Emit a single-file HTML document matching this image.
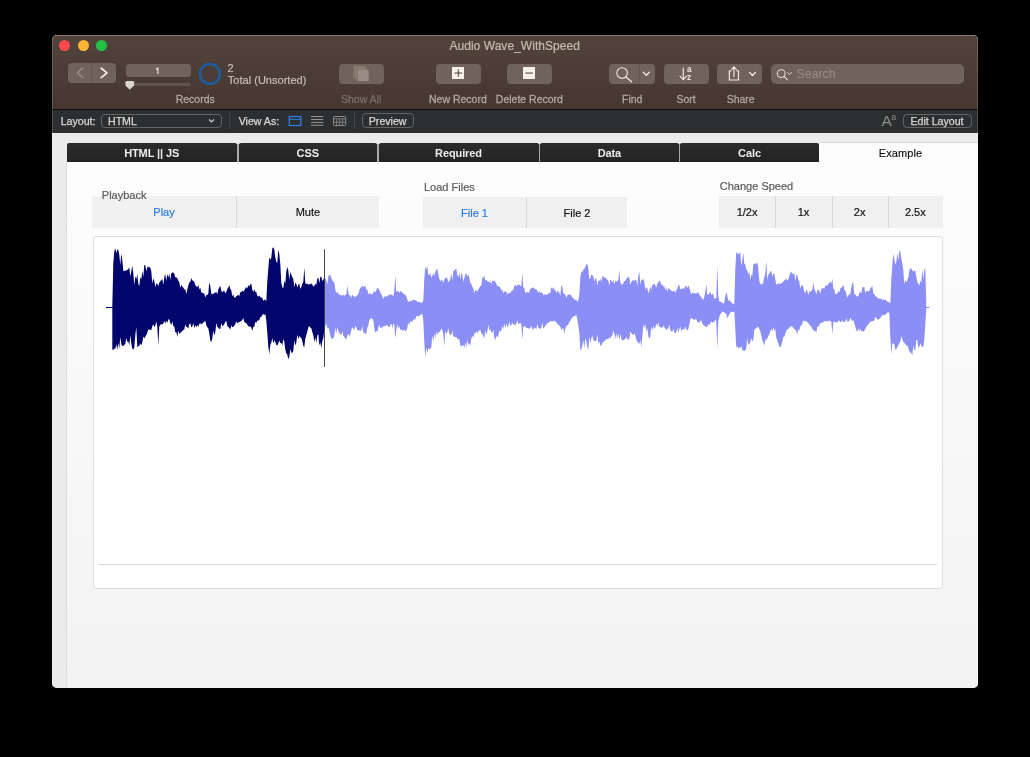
<!DOCTYPE html>
<html><head><meta charset="utf-8">
<style>
*{box-sizing:border-box;margin:0;padding:0}
html,body{width:1030px;height:757px;background:#000;overflow:hidden;font-family:"Liberation Sans",sans-serif}
.a{position:absolute}
#win{will-change:transform;position:absolute;left:52px;top:35px;width:926px;height:653px;border-radius:5px;overflow:hidden;background:#ebebeb}
#tb{position:absolute;left:0;top:0;width:926px;height:74px;background:linear-gradient(#52443c,#453730);border-top:1px solid #85776e}
.tl{position:absolute;top:3.6px;width:11.3px;height:11.3px;border-radius:50%}
.btn{position:absolute;background:#70635b;border-radius:4px}
.lbl{position:absolute;font-size:10.5px;color:#b2a69e;white-space:nowrap;top:56.7px;line-height:12px;-webkit-text-stroke:0.3px currentColor}
#lb{position:absolute;left:0;top:74px;width:926px;height:24px;background:#2d2e30;border-top:1px solid #0a0a0a}
.lbt{position:absolute;font-size:10.6px;color:#d9d9d9;white-space:nowrap;line-height:12px;-webkit-text-stroke:0.25px #d9d9d9}
.pill{position:absolute;border:1px solid #646567;border-radius:4px}
#content{position:absolute;left:0;top:98px;width:926px;height:555px;background:#ebebeb}
#panel{position:absolute;left:14px;top:29px;width:912px;height:526px;background:linear-gradient(#fdfdfd,#f9f9f9 40%,#f3f3f3);border-left:1px solid #dedede}
.tab{position:absolute;top:10px;height:19.1px;border-radius:2px 2px 0 0;background:linear-gradient(#2c2c2c,#232323);color:#ececec;font-weight:bold;font-size:11px;text-align:center;line-height:20px;letter-spacing:-0.1px}
.t{position:absolute;white-space:nowrap;font-size:11px;line-height:13px;-webkit-text-stroke:0.2px currentColor}
.sb{position:absolute;background:#f0f0f0}
.dv{position:absolute;top:0;width:1px;height:100%;background:#d6d6d6}
</style></head><body>
<div id="win">
  <div id="tb">
    <div class="tl" style="left:6.9px;background:#fb4a4c"></div>
    <div class="tl" style="left:25.5px;background:#fdb535"></div>
    <div class="tl" style="left:44px;background:#22c244"></div>
    <div class="a" style="left:-0.3px;width:926px;top:3.4px;text-align:center;font-size:12px;color:#c6bbb2;line-height:14px;letter-spacing:0.05px;-webkit-text-stroke:0.2px currentColor">Audio Wave_WithSpeed</div>

    <!-- nav -->
    <div class="btn" style="left:15.8px;top:26.9px;width:48.4px;height:19.9px"></div>
    <div class="a" style="left:39.2px;top:26.9px;width:0.8px;height:19.9px;background:#665951"></div>
    <svg class="a" style="left:0;top:0" width="926" height="74">
      <path d="M30.7 32.2 L25.3 36.9 L30.7 41.6" stroke="#958a82" stroke-width="1.6" fill="none" stroke-linecap="round" stroke-linejoin="round"/>
      <path d="M49.3 32.2 L54.9 36.9 L49.3 41.6" stroke="#f4ede6" stroke-width="1.8" fill="none" stroke-linecap="round" stroke-linejoin="round"/>
    </svg>
    <!-- record field -->
    <div class="btn" style="left:73.6px;top:27.6px;width:65.5px;height:13.4px;border-radius:3.5px"></div>
    <svg class="a" style="left:0;top:0" width="926" height="74"><path d="M103.9 33.4 L105.9 31.9 V38" stroke="#e9e1db" stroke-width="1.25" fill="none" stroke-linejoin="round"/></svg>
    <div class="a" style="left:80px;top:47px;width:59px;height:2.8px;background:#5f534c;border-radius:1.4px"></div>
    <svg class="a" style="left:0;top:0" width="926" height="74"><path d="M74.8 45.1 H80.7 Q82.1 45.1 82.1 46.5 V49.6 L77.75 53.8 L73.4 49.6 V46.5 Q73.4 45.1 74.8 45.1 Z" fill="#dad4cf"/><rect x="134.6" y="53" width="1" height="1" fill="#6a5e57"/></svg>
    <svg class="a" style="left:0;top:0" width="926" height="74"><circle cx="158" cy="37.9" r="9.9" stroke="#1f5b9f" stroke-width="2.7" fill="none"/></svg>
    <div class="t" style="left:175.6px;top:25.5px;font-size:11px;color:#c9bfb7">2</div>
    <div class="t" style="left:175.8px;top:38.1px;font-size:11px;color:#c9bfb7;letter-spacing:0.02px">Total (Unsorted)</div>
    <div class="lbl" style="left:123.7px">Records</div>

    <!-- show all -->
    <div class="btn" style="left:287px;top:27.7px;width:45px;height:20.2px"></div>
    <svg class="a" style="left:0;top:0" width="926" height="74">
      <rect x="301.8" y="30.1" width="10.8" height="11" fill="#7f726a" stroke="#8b7e76" stroke-width="0.7"/>
      <rect x="303.7" y="32" width="10.8" height="11" fill="#85786f" stroke="#918479" stroke-width="0.7"/>
      <rect x="305.9" y="34" width="10.8" height="11.1" fill="#998c84"/>
    </svg>
    <div class="lbl" style="left:289px;color:#7a6e66">Show All</div>

    <!-- new / delete -->
    <div class="btn" style="left:384px;top:27.9px;width:45px;height:19.8px"></div>
    <div class="a" style="left:399.8px;top:31.4px;width:12.5px;height:12.1px;background:#f6f0ea"></div>
    <svg class="a" style="left:399.8px;top:31.4px" width="13" height="13"><path d="M6.25 2.3 V9.8 M2.4 6.05 H10.1" stroke="#4a3d36" stroke-width="1"/></svg>
    <div class="btn" style="left:455.3px;top:27.9px;width:44.7px;height:19.8px"></div>
    <div class="a" style="left:470.8px;top:31.4px;width:12.3px;height:12.1px;background:#f6f0ea"></div>
    <svg class="a" style="left:470.8px;top:31.4px" width="13" height="13"><path d="M2.4 6.05 H9.9" stroke="#4a3d36" stroke-width="1"/></svg>
    <div class="lbl" style="left:377px">New Record</div>
    <div class="lbl" style="left:443.8px">Delete Record</div>

    <!-- find sort share -->
    <div class="btn" style="left:557.1px;top:28px;width:45.9px;height:19.7px"></div>
    <div class="a" style="left:586.6px;top:28px;width:0.8px;height:19.7px;background:#665951"></div>
    <div class="btn" style="left:612.1px;top:28px;width:45.1px;height:19.7px"></div>
    <div class="btn" style="left:665px;top:28px;width:45px;height:19.7px"></div>
    <div class="btn" style="left:719.3px;top:28px;width:193px;height:19.6px;border-radius:5px"></div>
    <div class="a" style="left:744.6px;top:31px;font-size:12.3px;color:#9a8e86;line-height:14px">Search</div>
    <svg class="a" style="left:0;top:0" width="926" height="74">
      <circle cx="570.1" cy="37" r="5.3" stroke="#e9e1da" stroke-width="1.15" fill="none"/>
      <path d="M574 41 L579.5 45.8" stroke="#efe7e1" stroke-width="1.3" stroke-linecap="round"/>
      <path d="M591.3 36.3 L594.3 39.2 L597.3 36.3" stroke="#efe7e1" stroke-width="1.4" fill="none" stroke-linecap="round" stroke-linejoin="round"/>
      <path d="M631.3 32.2 V43.4 M628 40.2 L631.3 43.6 L634.6 40.2" stroke="#efe7e1" stroke-width="1.2" fill="none" stroke-linecap="round"/>
      <text x="634.9" y="36.4" font-size="8.2" font-weight="bold" fill="#efe7e1" font-family="Liberation Sans">a</text>
      <text x="635.1" y="43.7" font-size="8.2" font-weight="bold" fill="#efe7e1" font-family="Liberation Sans">z</text>
      <path d="M679.4 34.9 H677.4 V44 H686.5 V34.9 H684.5" stroke="#efe7e1" stroke-width="1.2" fill="none"/>
      <path d="M681.95 40.4 V31.2 M679.6 33.3 L681.95 30.9 L684.3 33.3" stroke="#efe7e1" stroke-width="1.2" fill="none" stroke-linecap="round"/>
      <path d="M697.6 36.5 L700.5 39.4 L703.4 36.5" stroke="#efe7e1" stroke-width="1.4" fill="none" stroke-linecap="round" stroke-linejoin="round"/>
      <circle cx="729.2" cy="37.6" r="3.9" stroke="#e3dad3" stroke-width="1.1" fill="none"/>
      <path d="M731.9 40.5 L735.6 43.9" stroke="#e3dad3" stroke-width="1.1" stroke-linecap="round"/>
      <path d="M735.4 36.4 L737.6 38.4 L739.8 36.4" stroke="#e3dad3" stroke-width="1" fill="none"/>
    </svg>
    <div class="lbl" style="left:570px">Find</div>
    <div class="lbl" style="left:624.4px">Sort</div>
    <div class="lbl" style="left:674.7px">Share</div>
  </div>

  <div id="lb">
    <div class="lbt" style="left:8.7px;top:5px">Layout:</div>
    <div class="pill" style="left:48.5px;top:3.7px;width:121.3px;height:14px"></div>
    <div class="lbt" style="left:56px;top:5px">HTML</div>
    <svg class="a" style="left:0;top:0" width="926" height="24">
      <path d="M157 9.5 L159.5 12 L162 9.5" stroke="#cfcfcf" stroke-width="1.2" fill="none"/>
      <rect x="177.3" y="3" width="1" height="16" fill="#47484a"/>
      <rect x="237.3" y="6.5" width="11.5" height="9" stroke="#2f80ed" stroke-width="1.2" fill="none"/>
      <path d="M237 9.3 H249" stroke="#2f80ed" stroke-width="1.1"/>
      <path d="M259 6.6 H271.3 M259 9.5 H271.3 M259 12.4 H271.3 M259 15.2 H271.3" stroke="#a3a3a3" stroke-width="0.9"/>
      <rect x="281.5" y="6.5" width="12.2" height="9" rx="1" stroke="#8f8f8f" stroke-width="1" fill="none"/>
      <path d="M281.5 8.8 H293.7 M281.5 12.2 H293.7 M284.6 8.8 V15.5 M287.6 8.8 V15.5 M290.6 8.8 V15.5" stroke="#8f8f8f" stroke-width="0.8"/>
      <rect x="302" y="3" width="1" height="16" fill="#47484a"/>
      <text x="829.5" y="15.8" font-size="15.5" fill="#8c8c8c" font-family="Liberation Sans">A</text>
      <text x="839.3" y="9.6" font-size="8.8" fill="#8c8c8c" font-family="Liberation Sans">a</text>
    </svg>
    <div class="lbt" style="left:186.7px;top:5px">View As:</div>
    <div class="pill" style="left:310px;top:3.3px;width:51.5px;height:14.7px"></div>
    <div class="lbt" style="left:316.8px;top:5px">Preview</div>
    <div class="pill" style="left:851.3px;top:3.6px;width:68.7px;height:14.8px"></div>
    <div class="lbt" style="left:858.5px;top:5px">Edit Layout</div>
  </div>

  <div id="content">
    
    <div id="panel"></div>
    <div class="a" style="left:180px;top:10.6px;width:450px;height:18.5px;background:#a9a9a9"></div>
    <div class="tab" style="left:14.5px;width:170.4px">HTML || JS</div>
    <div class="tab" style="left:186.6px;width:138.3px">CSS</div>
    <div class="tab" style="left:326.5px;width:160px">Required</div>
    <div class="tab" style="left:488px;width:138.8px">Data</div>
    <div class="tab" style="left:628.3px;width:138.4px">Calc</div>
    <div class="a" style="left:767.4px;top:9.3px;width:159px;height:20px;background:#fdfdfd;border-top:1px solid #d9d9d9;border-top-left-radius:2px;font-size:11px;color:#111;text-align:center;line-height:20.4px;padding-left:3.3px;letter-spacing:0.1px;-webkit-text-stroke:0.15px #111">Example</div>

        <div class="sb" style="left:40.3px;top:62.5px;width:286.5px;height:32.2px">
      <div class="dv" style="left:143.7px"></div>
    </div>
    <div class="t" style="left:40.3px;top:73.2px;width:143.5px;text-align:center;color:#2c7be5">Play</div>
    <div class="t" style="left:185px;top:73.2px;width:141.8px;text-align:center;color:#151515">Mute</div>
    <div class="t" style="left:49.8px;top:56px;color:#5a5a5a">Playback</div>


    <div class="t" style="left:372px;top:47.5px;color:#5a5a5a">Load Files</div>
    <div class="sb" style="left:371.1px;top:64.4px;width:204px;height:30.4px">
      <div class="dv" style="left:102.9px"></div>
    </div>
    <div class="t" style="left:371.1px;top:74.2px;width:102.9px;text-align:center;color:#2c7be5">File 1</div>
    <div class="t" style="left:475px;top:74.2px;width:100.1px;text-align:center;color:#151515">File 2</div>

    <div class="t" style="left:667.8px;top:47.4px;color:#5a5a5a">Change Speed</div>
    <div class="sb" style="left:666.9px;top:63px;width:224.1px;height:31.9px">
      <div class="dv" style="left:56.4px"></div>
      <div class="dv" style="left:112.7px"></div>
      <div class="dv" style="left:168.7px"></div>
    </div>
    <div class="t" style="left:666.9px;top:73.2px;width:56.4px;text-align:center;color:#151515">1/2x</div>
    <div class="t" style="left:723.3px;top:73.2px;width:56.3px;text-align:center;color:#151515">1x</div>
    <div class="t" style="left:779.6px;top:73.2px;width:56px;text-align:center;color:#151515">2x</div>
    <div class="t" style="left:835.6px;top:73.2px;width:55.4px;text-align:center;color:#151515">2.5x</div>

    <div class="a" style="left:40.5px;top:102.5px;width:850px;height:353.5px;background:#fff;border:1px solid #dedede;border-radius:3px"></div>
    <div class="a" style="left:47px;top:431px;width:838px;height:1px;background:#dadada"></div>
  </div>
  <div class="a" style="left:0;top:0;width:926px;height:653px;border-radius:5px;border:1px solid rgba(255,255,255,0.16);border-top-color:transparent"></div>
</div>
<svg class="a" style="left:0;top:0" width="1030" height="757">
  <defs>
    <clipPath id="cd"><rect x="0" y="0" width="324.4" height="757"/></clipPath>
    <clipPath id="cl"><rect x="324.4" y="0" width="700" height="757"/></clipPath>
  </defs>
  <path d="M106 307.5 H929.5" stroke="#8b8ff5" stroke-width="1"/>
  <path d="M106 307.5 H113" stroke="#02056c" stroke-width="1"/>
  <path clip-path="url(#cd)" fill="#02056c" d="M112.3 307.5 L112.3 306.5 L113.3 262.8 L114.3 251.3 L115.3 248.3 L116.3 253.3 L117.3 249.6 L118.3 249.8 L119.3 255.1 L120.3 265.1 L121.3 253.5 L122.3 260.0 L123.3 270.7 L124.3 271.2 L125.3 270.5 L126.3 270.4 L127.3 270.0 L128.3 269.0 L129.3 267.3 L130.3 276.6 L131.3 271.6 L132.3 265.6 L133.3 273.3 L134.3 285.1 L135.3 276.2 L136.3 279.3 L137.3 274.0 L138.3 283.7 L139.3 286.3 L140.3 277.3 L141.3 279.2 L142.3 271.1 L143.3 277.1 L144.3 265.0 L145.3 265.0 L146.3 271.2 L147.3 267.5 L148.3 266.5 L149.3 267.3 L150.3 267.7 L151.3 271.2 L152.3 283.5 L153.3 278.4 L154.3 280.8 L155.3 287.1 L156.3 283.6 L157.3 283.6 L158.3 286.2 L159.3 282.4 L160.3 281.2 L161.3 280.1 L162.3 279.0 L163.3 284.8 L164.3 277.0 L165.3 274.0 L166.3 281.1 L167.3 273.9 L168.3 277.5 L169.3 273.4 L170.3 280.0 L171.3 273.6 L172.3 272.6 L173.3 272.4 L174.3 273.7 L175.3 277.4 L176.3 277.2 L177.3 278.3 L178.3 280.5 L179.3 282.2 L180.3 288.1 L181.3 284.5 L182.3 286.7 L183.3 287.5 L184.3 289.5 L185.3 289.3 L186.3 293.9 L187.3 289.4 L188.3 285.4 L189.3 282.6 L190.3 282.1 L191.3 278.1 L192.3 280.3 L193.3 280.9 L194.3 281.7 L195.3 285.5 L196.3 286.1 L197.3 287.4 L198.3 284.7 L199.3 289.4 L200.3 287.5 L201.3 292.7 L202.3 292.4 L203.3 293.5 L204.3 293.4 L205.3 297.4 L206.3 294.9 L207.3 294.9 L208.3 293.4 L209.3 282.3 L210.3 286.0 L211.3 293.5 L212.3 294.4 L213.3 293.9 L214.3 292.8 L215.3 292.7 L216.3 291.9 L217.3 294.3 L218.3 289.5 L219.3 287.3 L220.3 286.1 L221.3 290.7 L222.3 292.6 L223.3 291.0 L224.3 290.7 L225.3 293.6 L226.3 291.9 L227.3 288.9 L228.3 287.6 L229.3 284.9 L230.3 288.8 L231.3 290.2 L232.3 296.5 L233.3 294.2 L234.3 297.8 L235.3 297.4 L236.3 296.2 L237.3 295.5 L238.3 295.0 L239.3 295.9 L240.3 292.3 L241.3 292.0 L242.3 290.4 L243.3 291.7 L244.3 290.2 L245.3 288.5 L246.3 287.1 L247.3 288.5 L248.3 285.3 L249.3 286.3 L250.3 284.4 L251.3 283.4 L252.3 290.1 L253.3 292.1 L254.3 289.3 L255.3 291.9 L256.3 292.1 L257.3 295.4 L258.3 296.8 L259.3 295.6 L260.3 297.1 L261.3 297.7 L262.3 297.8 L263.3 301.0 L264.3 299.5 L265.3 299.7 L266.3 301.2 L267.3 281.2 L268.3 268.8 L269.3 257.2 L270.3 259.7 L271.3 257.8 L272.3 248.3 L273.3 247.2 L274.3 249.4 L275.3 257.3 L276.3 261.9 L277.3 262.6 L278.3 249.7 L279.3 253.9 L280.3 264.3 L281.3 283.0 L282.3 287.0 L283.3 288.4 L284.3 280.6 L285.3 283.8 L286.3 271.2 L287.3 266.9 L288.3 270.2 L289.3 279.7 L290.3 272.1 L291.3 274.4 L292.3 277.0 L293.3 278.9 L294.3 287.3 L295.3 282.8 L296.3 283.7 L297.3 287.4 L298.3 284.4 L299.3 283.7 L300.3 289.1 L301.3 286.9 L302.3 283.7 L303.3 281.9 L304.3 267.5 L305.3 283.4 L306.3 283.7 L307.3 283.8 L308.3 284.7 L309.3 284.0 L310.3 284.5 L311.3 283.2 L312.3 284.5 L313.3 286.5 L314.3 286.0 L315.3 283.5 L316.3 285.3 L317.3 278.4 L318.3 277.5 L319.3 283.3 L320.3 277.0 L321.3 276.6 L322.3 281.1 L323.3 279.8 L324.3 277.0 L325.3 278.4 L326.3 280.5 L327.3 284.8 L328.3 276.4 L329.3 274.4 L330.3 275.4 L331.3 277.5 L332.3 280.5 L333.3 281.5 L334.3 282.5 L335.3 289.7 L336.3 293.3 L337.3 291.5 L338.3 293.7 L339.3 294.5 L340.3 295.0 L341.3 295.3 L342.3 295.8 L343.3 294.5 L344.3 296.0 L345.3 294.5 L346.3 294.8 L347.3 285.4 L348.3 292.3 L349.3 295.4 L350.3 295.3 L351.3 298.1 L352.3 294.6 L353.3 296.0 L354.3 296.5 L355.3 297.2 L356.3 295.7 L357.3 295.4 L358.3 293.9 L359.3 290.6 L360.3 288.0 L361.3 287.2 L362.3 285.5 L363.3 287.1 L364.3 286.7 L365.3 285.3 L366.3 290.6 L367.3 288.8 L368.3 294.5 L369.3 293.0 L370.3 293.6 L371.3 294.5 L372.3 294.2 L373.3 292.5 L374.3 290.9 L375.3 292.4 L376.3 290.3 L377.3 287.6 L378.3 288.4 L379.3 289.9 L380.3 292.3 L381.3 294.2 L382.3 296.3 L383.3 299.0 L384.3 296.7 L385.3 296.2 L386.3 296.8 L387.3 295.7 L388.3 295.4 L389.3 295.0 L390.3 294.6 L391.3 294.4 L392.3 295.1 L393.3 296.5 L394.3 290.6 L395.3 275.5 L396.3 292.2 L397.3 291.3 L398.3 291.0 L399.3 293.1 L400.3 290.6 L401.3 292.1 L402.3 292.2 L403.3 293.8 L404.3 294.3 L405.3 294.8 L406.3 296.6 L407.3 299.6 L408.3 302.1 L409.3 301.5 L410.3 300.6 L411.3 301.4 L412.3 300.1 L413.3 300.2 L414.3 299.4 L415.3 300.5 L416.3 300.3 L417.3 302.3 L418.3 301.4 L419.3 301.9 L420.3 302.6 L421.3 302.7 L422.3 302.4 L423.3 300.4 L424.3 278.4 L425.3 266.0 L426.3 270.1 L427.3 265.7 L428.3 274.8 L429.3 275.3 L430.3 272.5 L431.3 278.0 L432.3 275.7 L433.3 272.9 L434.3 276.1 L435.3 271.7 L436.3 269.7 L437.3 268.9 L438.3 274.3 L439.3 278.4 L440.3 281.8 L441.3 279.5 L442.3 280.2 L443.3 282.9 L444.3 279.3 L445.3 278.4 L446.3 277.1 L447.3 278.4 L448.3 282.0 L449.3 281.5 L450.3 278.7 L451.3 273.3 L452.3 280.4 L453.3 271.2 L454.3 270.4 L455.3 269.3 L456.3 268.3 L457.3 275.2 L458.3 277.2 L459.3 272.1 L460.3 279.6 L461.3 273.0 L462.3 274.6 L463.3 282.0 L464.3 278.2 L465.3 274.6 L466.3 273.0 L467.3 277.0 L468.3 273.8 L469.3 277.5 L470.3 282.9 L471.3 283.7 L472.3 286.8 L473.3 288.1 L474.3 293.7 L475.3 289.6 L476.3 290.4 L477.3 291.7 L478.3 289.2 L479.3 287.9 L480.3 285.8 L481.3 286.1 L482.3 277.3 L483.3 278.0 L484.3 275.3 L485.3 280.7 L486.3 279.7 L487.3 280.9 L488.3 282.0 L489.3 281.8 L490.3 281.6 L491.3 284.6 L492.3 280.4 L493.3 281.2 L494.3 280.2 L495.3 282.0 L496.3 283.6 L497.3 286.2 L498.3 285.9 L499.3 286.7 L500.3 287.3 L501.3 290.9 L502.3 288.9 L503.3 293.6 L504.3 291.3 L505.3 291.7 L506.3 291.7 L507.3 294.5 L508.3 293.1 L509.3 292.7 L510.3 293.5 L511.3 291.3 L512.3 290.2 L513.3 290.3 L514.3 286.3 L515.3 284.2 L516.3 287.0 L517.3 285.1 L518.3 284.4 L519.3 285.0 L520.3 285.4 L521.3 286.6 L522.3 272.7 L523.3 287.6 L524.3 287.8 L525.3 293.2 L526.3 292.4 L527.3 291.7 L528.3 293.0 L529.3 291.7 L530.3 289.3 L531.3 288.1 L532.3 287.8 L533.3 287.2 L534.3 288.7 L535.3 289.1 L536.3 289.5 L537.3 290.6 L538.3 293.3 L539.3 290.8 L540.3 292.8 L541.3 292.7 L542.3 292.6 L543.3 295.3 L544.3 294.7 L545.3 294.3 L546.3 294.5 L547.3 294.7 L548.3 293.5 L549.3 293.1 L550.3 293.0 L551.3 287.0 L552.3 288.9 L553.3 287.0 L554.3 290.1 L555.3 289.6 L556.3 293.3 L557.3 290.8 L558.3 291.6 L559.3 292.6 L560.3 296.0 L561.3 285.0 L562.3 287.1 L563.3 293.1 L564.3 294.0 L565.3 294.6 L566.3 298.1 L567.3 295.6 L568.3 294.5 L569.3 294.7 L570.3 294.5 L571.3 295.2 L572.3 298.1 L573.3 297.6 L574.3 300.5 L575.3 299.5 L576.3 299.8 L577.3 301.9 L578.3 300.6 L579.3 294.5 L580.3 277.7 L581.3 271.0 L582.3 272.4 L583.3 269.8 L584.3 268.9 L585.3 267.0 L586.3 264.6 L587.3 263.4 L588.3 268.4 L589.3 279.1 L590.3 278.6 L591.3 274.2 L592.3 275.3 L593.3 276.1 L594.3 281.8 L595.3 278.7 L596.3 277.8 L597.3 286.3 L598.3 280.8 L599.3 280.9 L600.3 278.5 L601.3 282.0 L602.3 277.0 L603.3 276.1 L604.3 277.7 L605.3 277.8 L606.3 278.7 L607.3 279.8 L608.3 280.5 L609.3 285.7 L610.3 279.2 L611.3 280.6 L612.3 282.6 L613.3 280.2 L614.3 284.3 L615.3 280.4 L616.3 281.4 L617.3 281.3 L618.3 279.9 L619.3 269.8 L620.3 282.4 L621.3 284.0 L622.3 285.0 L623.3 283.3 L624.3 281.1 L625.3 281.0 L626.3 278.6 L627.3 278.2 L628.3 276.6 L629.3 277.6 L630.3 284.9 L631.3 281.7 L632.3 280.4 L633.3 280.0 L634.3 281.3 L635.3 279.7 L636.3 279.5 L637.3 286.3 L638.3 275.7 L639.3 271.0 L640.3 285.0 L641.3 279.6 L642.3 280.4 L643.3 278.4 L644.3 281.8 L645.3 289.8 L646.3 287.1 L647.3 288.3 L648.3 292.9 L649.3 291.3 L650.3 286.2 L651.3 289.7 L652.3 285.0 L653.3 284.4 L654.3 283.7 L655.3 285.6 L656.3 287.4 L657.3 283.8 L658.3 282.6 L659.3 280.5 L660.3 281.4 L661.3 285.2 L662.3 283.9 L663.3 286.8 L664.3 286.1 L665.3 290.6 L666.3 287.0 L667.3 291.9 L668.3 288.0 L669.3 288.7 L670.3 289.8 L671.3 290.7 L672.3 291.5 L673.3 290.8 L674.3 290.9 L675.3 292.7 L676.3 290.1 L677.3 289.1 L678.3 285.5 L679.3 284.7 L680.3 289.3 L681.3 289.2 L682.3 288.8 L683.3 287.4 L684.3 289.4 L685.3 286.1 L686.3 286.0 L687.3 288.3 L688.3 284.9 L689.3 288.0 L690.3 290.9 L691.3 294.6 L692.3 292.7 L693.3 292.7 L694.3 293.2 L695.3 293.5 L696.3 293.4 L697.3 292.7 L698.3 292.6 L699.3 294.7 L700.3 296.1 L701.3 297.4 L702.3 298.8 L703.3 300.1 L704.3 297.2 L705.3 291.8 L706.3 284.2 L707.3 295.0 L708.3 294.6 L709.3 293.4 L710.3 291.6 L711.3 295.1 L712.3 293.7 L713.3 294.6 L714.3 298.9 L715.3 297.9 L716.3 298.6 L717.3 265.3 L718.3 295.2 L719.3 301.4 L720.3 301.5 L721.3 302.2 L722.3 302.7 L723.3 303.7 L724.3 303.0 L725.3 296.0 L726.3 292.0 L727.3 295.8 L728.3 301.0 L729.3 299.8 L730.3 301.4 L731.3 301.9 L732.3 303.5 L733.3 304.0 L734.3 303.4 L735.3 269.1 L736.3 252.0 L737.3 253.3 L738.3 254.0 L739.3 253.5 L740.3 252.0 L741.3 266.1 L742.3 260.1 L743.3 252.8 L744.3 263.5 L745.3 264.8 L746.3 269.4 L747.3 270.8 L748.3 274.6 L749.3 271.6 L750.3 279.7 L751.3 274.6 L752.3 276.0 L753.3 264.5 L754.3 263.8 L755.3 263.6 L756.3 264.1 L757.3 261.9 L758.3 268.8 L759.3 280.8 L760.3 283.9 L761.3 284.2 L762.3 284.2 L763.3 282.6 L764.3 277.0 L765.3 273.8 L766.3 260.6 L767.3 279.9 L768.3 274.7 L769.3 273.3 L770.3 271.3 L771.3 270.9 L772.3 277.0 L773.3 273.3 L774.3 273.8 L775.3 279.6 L776.3 284.9 L777.3 283.6 L778.3 283.7 L779.3 283.7 L780.3 283.7 L781.3 283.1 L782.3 282.8 L783.3 281.5 L784.3 280.6 L785.3 279.7 L786.3 278.4 L787.3 280.7 L788.3 279.7 L789.3 275.7 L790.3 273.2 L791.3 271.3 L792.3 274.3 L793.3 273.4 L794.3 273.7 L795.3 281.0 L796.3 274.8 L797.3 275.2 L798.3 280.2 L799.3 281.2 L800.3 288.7 L801.3 285.3 L802.3 285.5 L803.3 286.7 L804.3 291.7 L805.3 293.0 L806.3 289.9 L807.3 290.7 L808.3 295.3 L809.3 290.8 L810.3 292.2 L811.3 290.4 L812.3 290.2 L813.3 282.2 L814.3 288.7 L815.3 290.9 L816.3 294.5 L817.3 289.9 L818.3 289.6 L819.3 291.0 L820.3 293.8 L821.3 288.6 L822.3 288.7 L823.3 287.7 L824.3 289.1 L825.3 285.8 L826.3 285.6 L827.3 285.7 L828.3 284.0 L829.3 283.0 L830.3 281.7 L831.3 283.8 L832.3 278.6 L833.3 288.6 L834.3 289.2 L835.3 294.3 L836.3 294.1 L837.3 293.5 L838.3 290.9 L839.3 292.4 L840.3 288.5 L841.3 287.6 L842.3 287.0 L843.3 284.3 L844.3 289.5 L845.3 290.7 L846.3 293.7 L847.3 297.7 L848.3 295.5 L849.3 294.0 L850.3 294.5 L851.3 287.3 L852.3 283.3 L853.3 282.7 L854.3 294.4 L855.3 294.0 L856.3 296.7 L857.3 296.0 L858.3 296.5 L859.3 293.0 L860.3 291.8 L861.3 293.3 L862.3 287.1 L863.3 287.5 L864.3 286.8 L865.3 293.2 L866.3 290.9 L867.3 291.0 L868.3 291.4 L869.3 290.9 L870.3 288.6 L871.3 287.5 L872.3 285.6 L873.3 293.8 L874.3 293.7 L875.3 296.3 L876.3 296.6 L877.3 297.4 L878.3 299.0 L879.3 297.9 L880.3 299.0 L881.3 298.6 L882.3 300.4 L883.3 299.1 L884.3 299.9 L885.3 299.8 L886.3 300.7 L887.3 301.4 L888.3 302.0 L889.3 302.3 L890.3 303.8 L891.3 279.6 L892.3 265.6 L893.3 253.7 L894.3 258.7 L895.3 264.4 L896.3 262.2 L897.3 253.0 L898.3 260.4 L899.3 251.0 L900.3 251.5 L901.3 258.2 L902.3 263.6 L903.3 270.2 L904.3 284.2 L905.3 280.1 L906.3 282.3 L907.3 280.5 L908.3 277.2 L909.3 270.8 L910.3 268.3 L911.3 268.7 L912.3 270.2 L913.3 271.7 L914.3 270.5 L915.3 270.9 L916.3 276.6 L917.3 281.7 L918.3 283.8 L919.3 285.8 L920.3 280.4 L921.3 283.2 L922.3 269.5 L923.3 279.5 L924.3 270.1 L925.3 268.2 L926.3 306.5 L926.3 307.5 L926.3 308.5 L925.3 324.0 L924.3 339.3 L923.3 347.2 L922.3 346.4 L921.3 346.3 L920.3 343.0 L919.3 346.9 L918.3 347.7 L917.3 339.7 L916.3 340.1 L915.3 350.0 L914.3 350.0 L913.3 345.4 L912.3 355.5 L911.3 352.8 L910.3 352.7 L909.3 351.1 L908.3 348.5 L907.3 345.0 L906.3 345.7 L905.3 344.0 L904.3 342.8 L903.3 341.9 L902.3 339.0 L901.3 336.1 L900.3 341.5 L899.3 343.2 L898.3 345.2 L897.3 347.2 L896.3 349.0 L895.3 349.7 L894.3 344.2 L893.3 343.3 L892.3 343.6 L891.3 354.5 L890.3 335.7 L889.3 312.4 L888.3 312.4 L887.3 312.4 L886.3 313.7 L885.3 314.5 L884.3 315.4 L883.3 314.9 L882.3 314.7 L881.3 316.2 L880.3 318.6 L879.3 319.0 L878.3 319.5 L877.3 319.6 L876.3 317.7 L875.3 316.7 L874.3 320.6 L873.3 320.9 L872.3 321.3 L871.3 321.5 L870.3 321.7 L869.3 323.0 L868.3 324.2 L867.3 325.6 L866.3 327.1 L865.3 328.7 L864.3 330.7 L863.3 331.9 L862.3 330.8 L861.3 331.5 L860.3 328.8 L859.3 331.5 L858.3 327.8 L857.3 331.7 L856.3 330.6 L855.3 326.7 L854.3 323.3 L853.3 319.8 L852.3 321.2 L851.3 319.8 L850.3 317.5 L849.3 321.2 L848.3 321.2 L847.3 321.6 L846.3 318.3 L845.3 321.9 L844.3 322.0 L843.3 322.0 L842.3 320.2 L841.3 321.5 L840.3 322.5 L839.3 320.5 L838.3 320.8 L837.3 322.4 L836.3 322.3 L835.3 322.0 L834.3 321.6 L833.3 322.6 L832.3 334.5 L831.3 321.6 L830.3 321.5 L829.3 320.2 L828.3 321.5 L827.3 321.3 L826.3 321.2 L825.3 321.2 L824.3 321.0 L823.3 322.2 L822.3 322.4 L821.3 323.2 L820.3 322.7 L819.3 325.4 L818.3 326.7 L817.3 326.2 L816.3 332.7 L815.3 330.6 L814.3 331.6 L813.3 329.4 L812.3 329.2 L811.3 326.6 L810.3 325.8 L809.3 324.5 L808.3 323.3 L807.3 322.2 L806.3 321.1 L805.3 321.3 L804.3 321.3 L803.3 320.2 L802.3 324.0 L801.3 325.3 L800.3 326.5 L799.3 331.1 L798.3 328.9 L797.3 334.6 L796.3 330.9 L795.3 329.8 L794.3 329.1 L793.3 327.9 L792.3 326.4 L791.3 325.9 L790.3 326.5 L789.3 327.4 L788.3 328.9 L787.3 329.3 L786.3 330.8 L785.3 333.8 L784.3 336.7 L783.3 336.7 L782.3 341.2 L781.3 345.4 L780.3 347.3 L779.3 346.5 L778.3 343.0 L777.3 340.5 L776.3 337.7 L775.3 328.5 L774.3 331.3 L773.3 326.9 L772.3 331.8 L771.3 328.6 L770.3 331.4 L769.3 334.6 L768.3 336.0 L767.3 338.2 L766.3 340.1 L765.3 339.5 L764.3 346.0 L763.3 342.3 L762.3 340.0 L761.3 335.5 L760.3 331.2 L759.3 328.8 L758.3 326.9 L757.3 326.7 L756.3 328.6 L755.3 328.5 L754.3 330.2 L753.3 340.3 L752.3 341.2 L751.3 338.0 L750.3 342.2 L749.3 343.8 L748.3 344.9 L747.3 337.8 L746.3 348.2 L745.3 350.4 L744.3 350.7 L743.3 350.6 L742.3 349.9 L741.3 345.7 L740.3 348.0 L739.3 347.4 L738.3 348.2 L737.3 346.1 L736.3 347.5 L735.3 328.8 L734.3 311.5 L733.3 312.1 L732.3 312.0 L731.3 311.8 L730.3 312.7 L729.3 314.3 L728.3 316.3 L727.3 318.6 L726.3 313.8 L725.3 313.5 L724.3 312.3 L723.3 311.9 L722.3 311.3 L721.3 313.6 L720.3 314.3 L719.3 316.9 L718.3 321.2 L717.3 349.5 L716.3 321.2 L715.3 319.6 L714.3 321.8 L713.3 322.2 L712.3 322.6 L711.3 321.4 L710.3 323.0 L709.3 325.6 L708.3 323.7 L707.3 326.8 L706.3 326.8 L705.3 326.5 L704.3 325.7 L703.3 325.0 L702.3 323.6 L701.3 320.3 L700.3 321.1 L699.3 322.7 L698.3 322.4 L697.3 322.1 L696.3 318.7 L695.3 319.3 L694.3 320.2 L693.3 319.1 L692.3 319.1 L691.3 317.8 L690.3 319.4 L689.3 324.5 L688.3 329.1 L687.3 330.2 L686.3 329.4 L685.3 326.5 L684.3 329.7 L683.3 329.0 L682.3 329.4 L681.3 331.5 L680.3 326.2 L679.3 329.2 L678.3 332.6 L677.3 327.8 L676.3 332.3 L675.3 333.2 L674.3 332.6 L673.3 328.6 L672.3 331.7 L671.3 331.4 L670.3 330.1 L669.3 324.4 L668.3 328.8 L667.3 328.4 L666.3 330.0 L665.3 328.5 L664.3 327.3 L663.3 325.6 L662.3 328.0 L661.3 327.5 L660.3 327.0 L659.3 326.9 L658.3 322.1 L657.3 326.5 L656.3 323.2 L655.3 327.5 L654.3 328.9 L653.3 325.9 L652.3 330.4 L651.3 326.7 L650.3 336.7 L649.3 338.4 L648.3 335.9 L647.3 327.7 L646.3 331.5 L645.3 323.9 L644.3 328.1 L643.3 324.1 L642.3 336.9 L641.3 346.9 L640.3 339.8 L639.3 344.3 L638.3 342.7 L637.3 341.8 L636.3 339.4 L635.3 335.4 L634.3 332.7 L633.3 335.3 L632.3 334.4 L631.3 333.2 L630.3 331.0 L629.3 339.4 L628.3 338.9 L627.3 339.5 L626.3 336.6 L625.3 339.4 L624.3 339.3 L623.3 340.3 L622.3 340.3 L621.3 338.8 L620.3 333.7 L619.3 340.5 L618.3 333.3 L617.3 338.8 L616.3 333.0 L615.3 339.1 L614.3 333.9 L613.3 330.5 L612.3 335.5 L611.3 336.3 L610.3 338.6 L609.3 337.2 L608.3 339.1 L607.3 339.1 L606.3 339.1 L605.3 340.0 L604.3 341.2 L603.3 342.0 L602.3 343.1 L601.3 346.1 L600.3 345.3 L599.3 341.2 L598.3 343.5 L597.3 334.1 L596.3 341.3 L595.3 340.9 L594.3 341.1 L593.3 340.0 L592.3 335.6 L591.3 338.4 L590.3 343.6 L589.3 336.5 L588.3 349.6 L587.3 347.7 L586.3 340.8 L585.3 338.6 L584.3 348.6 L583.3 340.0 L582.3 345.7 L581.3 349.6 L580.3 349.7 L579.3 332.3 L578.3 325.8 L577.3 319.2 L576.3 315.0 L575.3 315.8 L574.3 316.3 L573.3 316.3 L572.3 317.9 L571.3 318.2 L570.3 321.2 L569.3 321.8 L568.3 324.7 L567.3 325.6 L566.3 325.9 L565.3 328.9 L564.3 333.7 L563.3 328.2 L562.3 328.2 L561.3 330.2 L560.3 326.4 L559.3 325.7 L558.3 324.7 L557.3 323.7 L556.3 322.0 L555.3 322.0 L554.3 320.3 L553.3 321.4 L552.3 321.2 L551.3 321.3 L550.3 321.1 L549.3 322.3 L548.3 323.1 L547.3 322.7 L546.3 324.9 L545.3 325.4 L544.3 327.4 L543.3 328.4 L542.3 322.6 L541.3 328.0 L540.3 328.7 L539.3 328.6 L538.3 327.5 L537.3 323.8 L536.3 329.4 L535.3 328.0 L534.3 327.5 L533.3 329.4 L532.3 329.1 L531.3 325.5 L530.3 328.0 L529.3 328.6 L528.3 328.5 L527.3 328.0 L526.3 328.1 L525.3 326.3 L524.3 326.3 L523.3 326.6 L522.3 339.8 L521.3 324.6 L520.3 323.1 L519.3 323.2 L518.3 324.4 L517.3 320.0 L516.3 324.1 L515.3 324.7 L514.3 324.9 L513.3 324.0 L512.3 322.8 L511.3 325.2 L510.3 326.1 L509.3 321.2 L508.3 326.3 L507.3 327.2 L506.3 323.1 L505.3 328.4 L504.3 323.5 L503.3 329.3 L502.3 325.8 L501.3 330.7 L500.3 331.5 L499.3 330.8 L498.3 335.5 L497.3 337.3 L496.3 335.9 L495.3 340.3 L494.3 337.9 L493.3 329.6 L492.3 333.1 L491.3 332.2 L490.3 329.2 L489.3 330.2 L488.3 324.4 L487.3 331.5 L486.3 334.8 L485.3 329.9 L484.3 338.2 L483.3 336.6 L482.3 333.4 L481.3 333.5 L480.3 329.4 L479.3 330.4 L478.3 331.8 L477.3 333.2 L476.3 331.1 L475.3 333.4 L474.3 333.6 L473.3 337.6 L472.3 336.1 L471.3 338.5 L470.3 346.1 L469.3 343.1 L468.3 345.0 L467.3 339.5 L466.3 347.9 L465.3 342.2 L464.3 348.0 L463.3 344.7 L462.3 345.8 L461.3 346.4 L460.3 345.4 L459.3 338.9 L458.3 339.7 L457.3 338.4 L456.3 336.9 L455.3 337.1 L454.3 336.8 L453.3 336.2 L452.3 330.2 L451.3 335.0 L450.3 334.8 L449.3 334.0 L448.3 327.9 L447.3 332.6 L446.3 333.8 L445.3 330.8 L444.3 346.3 L443.3 333.9 L442.3 330.0 L441.3 328.6 L440.3 331.2 L439.3 332.0 L438.3 332.7 L437.3 335.0 L436.3 331.2 L435.3 338.4 L434.3 333.5 L433.3 341.7 L432.3 335.3 L431.3 347.4 L430.3 348.4 L429.3 349.6 L428.3 348.2 L427.3 353.1 L426.3 347.2 L425.3 357.3 L424.3 342.4 L423.3 320.4 L422.3 313.5 L421.3 314.4 L420.3 315.0 L419.3 315.6 L418.3 316.8 L417.3 315.9 L416.3 316.0 L415.3 319.6 L414.3 319.2 L413.3 320.1 L412.3 321.7 L411.3 321.8 L410.3 320.7 L409.3 325.6 L408.3 322.3 L407.3 328.1 L406.3 330.4 L405.3 331.6 L404.3 329.2 L403.3 330.8 L402.3 330.4 L401.3 329.5 L400.3 329.8 L399.3 326.1 L398.3 328.8 L397.3 324.1 L396.3 330.1 L395.3 338.6 L394.3 324.5 L393.3 323.5 L392.3 328.2 L391.3 323.6 L390.3 325.0 L389.3 327.2 L388.3 326.9 L387.3 324.7 L386.3 325.6 L385.3 326.4 L384.3 325.5 L383.3 326.6 L382.3 327.5 L381.3 327.4 L380.3 328.2 L379.3 324.6 L378.3 327.8 L377.3 331.8 L376.3 331.1 L375.3 332.8 L374.3 328.5 L373.3 319.8 L372.3 319.1 L371.3 317.7 L370.3 319.0 L369.3 320.3 L368.3 325.7 L367.3 327.5 L366.3 333.3 L365.3 334.1 L364.3 332.4 L363.3 332.8 L362.3 326.4 L361.3 330.2 L360.3 331.0 L359.3 330.2 L358.3 330.6 L357.3 329.9 L356.3 327.2 L355.3 325.8 L354.3 330.4 L353.3 328.4 L352.3 327.3 L351.3 330.1 L350.3 334.6 L349.3 336.8 L348.3 333.4 L347.3 335.7 L346.3 339.5 L345.3 338.4 L344.3 336.9 L343.3 335.9 L342.3 331.0 L341.3 335.2 L340.3 334.0 L339.3 333.4 L338.3 330.5 L337.3 327.2 L336.3 334.1 L335.3 327.3 L334.3 336.3 L333.3 338.1 L332.3 338.9 L331.3 338.5 L330.3 335.3 L329.3 330.3 L328.3 327.4 L327.3 328.5 L326.3 322.9 L325.3 326.5 L324.3 330.0 L323.3 338.1 L322.3 341.2 L321.3 347.9 L320.3 342.4 L319.3 345.6 L318.3 334.0 L317.3 335.6 L316.3 342.9 L315.3 337.4 L314.3 342.0 L313.3 335.2 L312.3 332.0 L311.3 328.2 L310.3 327.5 L309.3 326.1 L308.3 327.6 L307.3 331.4 L306.3 335.3 L305.3 338.6 L304.3 347.1 L303.3 346.0 L302.3 341.1 L301.3 338.0 L300.3 337.3 L299.3 336.1 L298.3 339.3 L297.3 334.4 L296.3 343.1 L295.3 345.5 L294.3 340.2 L293.3 350.9 L292.3 352.7 L291.3 352.7 L290.3 349.1 L289.3 356.8 L288.3 359.3 L287.3 354.5 L286.3 353.6 L285.3 349.5 L284.3 341.8 L283.3 339.0 L282.3 345.4 L281.3 343.1 L280.3 342.9 L279.3 340.4 L278.3 343.4 L277.3 345.5 L276.3 344.9 L275.3 341.9 L274.3 340.3 L273.3 343.4 L272.3 337.9 L271.3 342.7 L270.3 344.8 L269.3 354.3 L268.3 346.4 L267.3 333.2 L266.3 320.2 L265.3 314.0 L264.3 314.9 L263.3 314.1 L262.3 315.1 L261.3 316.9 L260.3 317.1 L259.3 320.0 L258.3 320.8 L257.3 320.4 L256.3 323.1 L255.3 321.7 L254.3 326.7 L253.3 326.7 L252.3 330.9 L251.3 327.6 L250.3 326.5 L249.3 326.8 L248.3 325.9 L247.3 324.8 L246.3 323.2 L245.3 322.7 L244.3 322.0 L243.3 317.9 L242.3 320.1 L241.3 321.0 L240.3 321.7 L239.3 322.0 L238.3 322.6 L237.3 323.2 L236.3 321.6 L235.3 323.9 L234.3 325.7 L233.3 326.7 L232.3 327.2 L231.3 325.3 L230.3 329.4 L229.3 328.1 L228.3 327.1 L227.3 326.0 L226.3 320.9 L225.3 321.8 L224.3 324.3 L223.3 325.4 L222.3 326.2 L221.3 323.3 L220.3 328.8 L219.3 329.1 L218.3 327.8 L217.3 326.8 L216.3 322.9 L215.3 332.2 L214.3 335.6 L213.3 330.5 L212.3 338.3 L211.3 342.1 L210.3 340.4 L209.3 333.5 L208.3 328.2 L207.3 327.3 L206.3 325.2 L205.3 320.4 L204.3 321.9 L203.3 322.4 L202.3 323.8 L201.3 324.1 L200.3 323.5 L199.3 323.8 L198.3 327.1 L197.3 325.1 L196.3 327.5 L195.3 324.9 L194.3 328.3 L193.3 322.9 L192.3 326.5 L191.3 327.2 L190.3 323.2 L189.3 323.9 L188.3 328.4 L187.3 327.2 L186.3 326.9 L185.3 324.6 L184.3 329.5 L183.3 329.9 L182.3 331.1 L181.3 331.9 L180.3 333.0 L179.3 334.1 L178.3 330.6 L177.3 336.9 L176.3 332.1 L175.3 332.4 L174.3 326.6 L173.3 326.2 L172.3 321.6 L171.3 325.1 L170.3 322.9 L169.3 319.4 L168.3 319.3 L167.3 323.1 L166.3 320.8 L165.3 323.6 L164.3 320.8 L163.3 323.8 L162.3 324.3 L161.3 324.2 L160.3 324.8 L159.3 326.5 L158.3 345.6 L157.3 327.0 L156.3 321.4 L155.3 325.6 L154.3 327.3 L153.3 324.2 L152.3 326.0 L151.3 330.0 L150.3 330.0 L149.3 329.4 L148.3 329.4 L147.3 332.8 L146.3 334.9 L145.3 336.6 L144.3 338.4 L143.3 336.5 L142.3 342.6 L141.3 345.2 L140.3 343.5 L139.3 345.9 L138.3 345.9 L137.3 347.6 L136.3 326.9 L135.3 335.1 L134.3 347.5 L133.3 349.4 L132.3 348.7 L131.3 343.4 L130.3 335.3 L129.3 345.2 L128.3 341.7 L127.3 341.7 L126.3 338.1 L125.3 343.7 L124.3 345.0 L123.3 345.7 L122.3 346.3 L121.3 344.1 L120.3 337.0 L119.3 348.4 L118.3 343.2 L117.3 349.8 L116.3 344.2 L115.3 348.9 L114.3 348.3 L113.3 349.9 L112.3 349.4 Z"/>
  <path clip-path="url(#cl)" fill="#8b8ff5" d="M112.3 307.5 L112.3 306.5 L113.3 262.8 L114.3 251.3 L115.3 248.3 L116.3 253.3 L117.3 249.6 L118.3 249.8 L119.3 255.1 L120.3 265.1 L121.3 253.5 L122.3 260.0 L123.3 270.7 L124.3 271.2 L125.3 270.5 L126.3 270.4 L127.3 270.0 L128.3 269.0 L129.3 267.3 L130.3 276.6 L131.3 271.6 L132.3 265.6 L133.3 273.3 L134.3 285.1 L135.3 276.2 L136.3 279.3 L137.3 274.0 L138.3 283.7 L139.3 286.3 L140.3 277.3 L141.3 279.2 L142.3 271.1 L143.3 277.1 L144.3 265.0 L145.3 265.0 L146.3 271.2 L147.3 267.5 L148.3 266.5 L149.3 267.3 L150.3 267.7 L151.3 271.2 L152.3 283.5 L153.3 278.4 L154.3 280.8 L155.3 287.1 L156.3 283.6 L157.3 283.6 L158.3 286.2 L159.3 282.4 L160.3 281.2 L161.3 280.1 L162.3 279.0 L163.3 284.8 L164.3 277.0 L165.3 274.0 L166.3 281.1 L167.3 273.9 L168.3 277.5 L169.3 273.4 L170.3 280.0 L171.3 273.6 L172.3 272.6 L173.3 272.4 L174.3 273.7 L175.3 277.4 L176.3 277.2 L177.3 278.3 L178.3 280.5 L179.3 282.2 L180.3 288.1 L181.3 284.5 L182.3 286.7 L183.3 287.5 L184.3 289.5 L185.3 289.3 L186.3 293.9 L187.3 289.4 L188.3 285.4 L189.3 282.6 L190.3 282.1 L191.3 278.1 L192.3 280.3 L193.3 280.9 L194.3 281.7 L195.3 285.5 L196.3 286.1 L197.3 287.4 L198.3 284.7 L199.3 289.4 L200.3 287.5 L201.3 292.7 L202.3 292.4 L203.3 293.5 L204.3 293.4 L205.3 297.4 L206.3 294.9 L207.3 294.9 L208.3 293.4 L209.3 282.3 L210.3 286.0 L211.3 293.5 L212.3 294.4 L213.3 293.9 L214.3 292.8 L215.3 292.7 L216.3 291.9 L217.3 294.3 L218.3 289.5 L219.3 287.3 L220.3 286.1 L221.3 290.7 L222.3 292.6 L223.3 291.0 L224.3 290.7 L225.3 293.6 L226.3 291.9 L227.3 288.9 L228.3 287.6 L229.3 284.9 L230.3 288.8 L231.3 290.2 L232.3 296.5 L233.3 294.2 L234.3 297.8 L235.3 297.4 L236.3 296.2 L237.3 295.5 L238.3 295.0 L239.3 295.9 L240.3 292.3 L241.3 292.0 L242.3 290.4 L243.3 291.7 L244.3 290.2 L245.3 288.5 L246.3 287.1 L247.3 288.5 L248.3 285.3 L249.3 286.3 L250.3 284.4 L251.3 283.4 L252.3 290.1 L253.3 292.1 L254.3 289.3 L255.3 291.9 L256.3 292.1 L257.3 295.4 L258.3 296.8 L259.3 295.6 L260.3 297.1 L261.3 297.7 L262.3 297.8 L263.3 301.0 L264.3 299.5 L265.3 299.7 L266.3 301.2 L267.3 281.2 L268.3 268.8 L269.3 257.2 L270.3 259.7 L271.3 257.8 L272.3 248.3 L273.3 247.2 L274.3 249.4 L275.3 257.3 L276.3 261.9 L277.3 262.6 L278.3 249.7 L279.3 253.9 L280.3 264.3 L281.3 283.0 L282.3 287.0 L283.3 288.4 L284.3 280.6 L285.3 283.8 L286.3 271.2 L287.3 266.9 L288.3 270.2 L289.3 279.7 L290.3 272.1 L291.3 274.4 L292.3 277.0 L293.3 278.9 L294.3 287.3 L295.3 282.8 L296.3 283.7 L297.3 287.4 L298.3 284.4 L299.3 283.7 L300.3 289.1 L301.3 286.9 L302.3 283.7 L303.3 281.9 L304.3 267.5 L305.3 283.4 L306.3 283.7 L307.3 283.8 L308.3 284.7 L309.3 284.0 L310.3 284.5 L311.3 283.2 L312.3 284.5 L313.3 286.5 L314.3 286.0 L315.3 283.5 L316.3 285.3 L317.3 278.4 L318.3 277.5 L319.3 283.3 L320.3 277.0 L321.3 276.6 L322.3 281.1 L323.3 279.8 L324.3 277.0 L325.3 278.4 L326.3 280.5 L327.3 284.8 L328.3 276.4 L329.3 274.4 L330.3 275.4 L331.3 277.5 L332.3 280.5 L333.3 281.5 L334.3 282.5 L335.3 289.7 L336.3 293.3 L337.3 291.5 L338.3 293.7 L339.3 294.5 L340.3 295.0 L341.3 295.3 L342.3 295.8 L343.3 294.5 L344.3 296.0 L345.3 294.5 L346.3 294.8 L347.3 285.4 L348.3 292.3 L349.3 295.4 L350.3 295.3 L351.3 298.1 L352.3 294.6 L353.3 296.0 L354.3 296.5 L355.3 297.2 L356.3 295.7 L357.3 295.4 L358.3 293.9 L359.3 290.6 L360.3 288.0 L361.3 287.2 L362.3 285.5 L363.3 287.1 L364.3 286.7 L365.3 285.3 L366.3 290.6 L367.3 288.8 L368.3 294.5 L369.3 293.0 L370.3 293.6 L371.3 294.5 L372.3 294.2 L373.3 292.5 L374.3 290.9 L375.3 292.4 L376.3 290.3 L377.3 287.6 L378.3 288.4 L379.3 289.9 L380.3 292.3 L381.3 294.2 L382.3 296.3 L383.3 299.0 L384.3 296.7 L385.3 296.2 L386.3 296.8 L387.3 295.7 L388.3 295.4 L389.3 295.0 L390.3 294.6 L391.3 294.4 L392.3 295.1 L393.3 296.5 L394.3 290.6 L395.3 275.5 L396.3 292.2 L397.3 291.3 L398.3 291.0 L399.3 293.1 L400.3 290.6 L401.3 292.1 L402.3 292.2 L403.3 293.8 L404.3 294.3 L405.3 294.8 L406.3 296.6 L407.3 299.6 L408.3 302.1 L409.3 301.5 L410.3 300.6 L411.3 301.4 L412.3 300.1 L413.3 300.2 L414.3 299.4 L415.3 300.5 L416.3 300.3 L417.3 302.3 L418.3 301.4 L419.3 301.9 L420.3 302.6 L421.3 302.7 L422.3 302.4 L423.3 300.4 L424.3 278.4 L425.3 266.0 L426.3 270.1 L427.3 265.7 L428.3 274.8 L429.3 275.3 L430.3 272.5 L431.3 278.0 L432.3 275.7 L433.3 272.9 L434.3 276.1 L435.3 271.7 L436.3 269.7 L437.3 268.9 L438.3 274.3 L439.3 278.4 L440.3 281.8 L441.3 279.5 L442.3 280.2 L443.3 282.9 L444.3 279.3 L445.3 278.4 L446.3 277.1 L447.3 278.4 L448.3 282.0 L449.3 281.5 L450.3 278.7 L451.3 273.3 L452.3 280.4 L453.3 271.2 L454.3 270.4 L455.3 269.3 L456.3 268.3 L457.3 275.2 L458.3 277.2 L459.3 272.1 L460.3 279.6 L461.3 273.0 L462.3 274.6 L463.3 282.0 L464.3 278.2 L465.3 274.6 L466.3 273.0 L467.3 277.0 L468.3 273.8 L469.3 277.5 L470.3 282.9 L471.3 283.7 L472.3 286.8 L473.3 288.1 L474.3 293.7 L475.3 289.6 L476.3 290.4 L477.3 291.7 L478.3 289.2 L479.3 287.9 L480.3 285.8 L481.3 286.1 L482.3 277.3 L483.3 278.0 L484.3 275.3 L485.3 280.7 L486.3 279.7 L487.3 280.9 L488.3 282.0 L489.3 281.8 L490.3 281.6 L491.3 284.6 L492.3 280.4 L493.3 281.2 L494.3 280.2 L495.3 282.0 L496.3 283.6 L497.3 286.2 L498.3 285.9 L499.3 286.7 L500.3 287.3 L501.3 290.9 L502.3 288.9 L503.3 293.6 L504.3 291.3 L505.3 291.7 L506.3 291.7 L507.3 294.5 L508.3 293.1 L509.3 292.7 L510.3 293.5 L511.3 291.3 L512.3 290.2 L513.3 290.3 L514.3 286.3 L515.3 284.2 L516.3 287.0 L517.3 285.1 L518.3 284.4 L519.3 285.0 L520.3 285.4 L521.3 286.6 L522.3 272.7 L523.3 287.6 L524.3 287.8 L525.3 293.2 L526.3 292.4 L527.3 291.7 L528.3 293.0 L529.3 291.7 L530.3 289.3 L531.3 288.1 L532.3 287.8 L533.3 287.2 L534.3 288.7 L535.3 289.1 L536.3 289.5 L537.3 290.6 L538.3 293.3 L539.3 290.8 L540.3 292.8 L541.3 292.7 L542.3 292.6 L543.3 295.3 L544.3 294.7 L545.3 294.3 L546.3 294.5 L547.3 294.7 L548.3 293.5 L549.3 293.1 L550.3 293.0 L551.3 287.0 L552.3 288.9 L553.3 287.0 L554.3 290.1 L555.3 289.6 L556.3 293.3 L557.3 290.8 L558.3 291.6 L559.3 292.6 L560.3 296.0 L561.3 285.0 L562.3 287.1 L563.3 293.1 L564.3 294.0 L565.3 294.6 L566.3 298.1 L567.3 295.6 L568.3 294.5 L569.3 294.7 L570.3 294.5 L571.3 295.2 L572.3 298.1 L573.3 297.6 L574.3 300.5 L575.3 299.5 L576.3 299.8 L577.3 301.9 L578.3 300.6 L579.3 294.5 L580.3 277.7 L581.3 271.0 L582.3 272.4 L583.3 269.8 L584.3 268.9 L585.3 267.0 L586.3 264.6 L587.3 263.4 L588.3 268.4 L589.3 279.1 L590.3 278.6 L591.3 274.2 L592.3 275.3 L593.3 276.1 L594.3 281.8 L595.3 278.7 L596.3 277.8 L597.3 286.3 L598.3 280.8 L599.3 280.9 L600.3 278.5 L601.3 282.0 L602.3 277.0 L603.3 276.1 L604.3 277.7 L605.3 277.8 L606.3 278.7 L607.3 279.8 L608.3 280.5 L609.3 285.7 L610.3 279.2 L611.3 280.6 L612.3 282.6 L613.3 280.2 L614.3 284.3 L615.3 280.4 L616.3 281.4 L617.3 281.3 L618.3 279.9 L619.3 269.8 L620.3 282.4 L621.3 284.0 L622.3 285.0 L623.3 283.3 L624.3 281.1 L625.3 281.0 L626.3 278.6 L627.3 278.2 L628.3 276.6 L629.3 277.6 L630.3 284.9 L631.3 281.7 L632.3 280.4 L633.3 280.0 L634.3 281.3 L635.3 279.7 L636.3 279.5 L637.3 286.3 L638.3 275.7 L639.3 271.0 L640.3 285.0 L641.3 279.6 L642.3 280.4 L643.3 278.4 L644.3 281.8 L645.3 289.8 L646.3 287.1 L647.3 288.3 L648.3 292.9 L649.3 291.3 L650.3 286.2 L651.3 289.7 L652.3 285.0 L653.3 284.4 L654.3 283.7 L655.3 285.6 L656.3 287.4 L657.3 283.8 L658.3 282.6 L659.3 280.5 L660.3 281.4 L661.3 285.2 L662.3 283.9 L663.3 286.8 L664.3 286.1 L665.3 290.6 L666.3 287.0 L667.3 291.9 L668.3 288.0 L669.3 288.7 L670.3 289.8 L671.3 290.7 L672.3 291.5 L673.3 290.8 L674.3 290.9 L675.3 292.7 L676.3 290.1 L677.3 289.1 L678.3 285.5 L679.3 284.7 L680.3 289.3 L681.3 289.2 L682.3 288.8 L683.3 287.4 L684.3 289.4 L685.3 286.1 L686.3 286.0 L687.3 288.3 L688.3 284.9 L689.3 288.0 L690.3 290.9 L691.3 294.6 L692.3 292.7 L693.3 292.7 L694.3 293.2 L695.3 293.5 L696.3 293.4 L697.3 292.7 L698.3 292.6 L699.3 294.7 L700.3 296.1 L701.3 297.4 L702.3 298.8 L703.3 300.1 L704.3 297.2 L705.3 291.8 L706.3 284.2 L707.3 295.0 L708.3 294.6 L709.3 293.4 L710.3 291.6 L711.3 295.1 L712.3 293.7 L713.3 294.6 L714.3 298.9 L715.3 297.9 L716.3 298.6 L717.3 265.3 L718.3 295.2 L719.3 301.4 L720.3 301.5 L721.3 302.2 L722.3 302.7 L723.3 303.7 L724.3 303.0 L725.3 296.0 L726.3 292.0 L727.3 295.8 L728.3 301.0 L729.3 299.8 L730.3 301.4 L731.3 301.9 L732.3 303.5 L733.3 304.0 L734.3 303.4 L735.3 269.1 L736.3 252.0 L737.3 253.3 L738.3 254.0 L739.3 253.5 L740.3 252.0 L741.3 266.1 L742.3 260.1 L743.3 252.8 L744.3 263.5 L745.3 264.8 L746.3 269.4 L747.3 270.8 L748.3 274.6 L749.3 271.6 L750.3 279.7 L751.3 274.6 L752.3 276.0 L753.3 264.5 L754.3 263.8 L755.3 263.6 L756.3 264.1 L757.3 261.9 L758.3 268.8 L759.3 280.8 L760.3 283.9 L761.3 284.2 L762.3 284.2 L763.3 282.6 L764.3 277.0 L765.3 273.8 L766.3 260.6 L767.3 279.9 L768.3 274.7 L769.3 273.3 L770.3 271.3 L771.3 270.9 L772.3 277.0 L773.3 273.3 L774.3 273.8 L775.3 279.6 L776.3 284.9 L777.3 283.6 L778.3 283.7 L779.3 283.7 L780.3 283.7 L781.3 283.1 L782.3 282.8 L783.3 281.5 L784.3 280.6 L785.3 279.7 L786.3 278.4 L787.3 280.7 L788.3 279.7 L789.3 275.7 L790.3 273.2 L791.3 271.3 L792.3 274.3 L793.3 273.4 L794.3 273.7 L795.3 281.0 L796.3 274.8 L797.3 275.2 L798.3 280.2 L799.3 281.2 L800.3 288.7 L801.3 285.3 L802.3 285.5 L803.3 286.7 L804.3 291.7 L805.3 293.0 L806.3 289.9 L807.3 290.7 L808.3 295.3 L809.3 290.8 L810.3 292.2 L811.3 290.4 L812.3 290.2 L813.3 282.2 L814.3 288.7 L815.3 290.9 L816.3 294.5 L817.3 289.9 L818.3 289.6 L819.3 291.0 L820.3 293.8 L821.3 288.6 L822.3 288.7 L823.3 287.7 L824.3 289.1 L825.3 285.8 L826.3 285.6 L827.3 285.7 L828.3 284.0 L829.3 283.0 L830.3 281.7 L831.3 283.8 L832.3 278.6 L833.3 288.6 L834.3 289.2 L835.3 294.3 L836.3 294.1 L837.3 293.5 L838.3 290.9 L839.3 292.4 L840.3 288.5 L841.3 287.6 L842.3 287.0 L843.3 284.3 L844.3 289.5 L845.3 290.7 L846.3 293.7 L847.3 297.7 L848.3 295.5 L849.3 294.0 L850.3 294.5 L851.3 287.3 L852.3 283.3 L853.3 282.7 L854.3 294.4 L855.3 294.0 L856.3 296.7 L857.3 296.0 L858.3 296.5 L859.3 293.0 L860.3 291.8 L861.3 293.3 L862.3 287.1 L863.3 287.5 L864.3 286.8 L865.3 293.2 L866.3 290.9 L867.3 291.0 L868.3 291.4 L869.3 290.9 L870.3 288.6 L871.3 287.5 L872.3 285.6 L873.3 293.8 L874.3 293.7 L875.3 296.3 L876.3 296.6 L877.3 297.4 L878.3 299.0 L879.3 297.9 L880.3 299.0 L881.3 298.6 L882.3 300.4 L883.3 299.1 L884.3 299.9 L885.3 299.8 L886.3 300.7 L887.3 301.4 L888.3 302.0 L889.3 302.3 L890.3 303.8 L891.3 279.6 L892.3 265.6 L893.3 253.7 L894.3 258.7 L895.3 264.4 L896.3 262.2 L897.3 253.0 L898.3 260.4 L899.3 251.0 L900.3 251.5 L901.3 258.2 L902.3 263.6 L903.3 270.2 L904.3 284.2 L905.3 280.1 L906.3 282.3 L907.3 280.5 L908.3 277.2 L909.3 270.8 L910.3 268.3 L911.3 268.7 L912.3 270.2 L913.3 271.7 L914.3 270.5 L915.3 270.9 L916.3 276.6 L917.3 281.7 L918.3 283.8 L919.3 285.8 L920.3 280.4 L921.3 283.2 L922.3 269.5 L923.3 279.5 L924.3 270.1 L925.3 268.2 L926.3 306.5 L926.3 307.5 L926.3 308.5 L925.3 324.0 L924.3 339.3 L923.3 347.2 L922.3 346.4 L921.3 346.3 L920.3 343.0 L919.3 346.9 L918.3 347.7 L917.3 339.7 L916.3 340.1 L915.3 350.0 L914.3 350.0 L913.3 345.4 L912.3 355.5 L911.3 352.8 L910.3 352.7 L909.3 351.1 L908.3 348.5 L907.3 345.0 L906.3 345.7 L905.3 344.0 L904.3 342.8 L903.3 341.9 L902.3 339.0 L901.3 336.1 L900.3 341.5 L899.3 343.2 L898.3 345.2 L897.3 347.2 L896.3 349.0 L895.3 349.7 L894.3 344.2 L893.3 343.3 L892.3 343.6 L891.3 354.5 L890.3 335.7 L889.3 312.4 L888.3 312.4 L887.3 312.4 L886.3 313.7 L885.3 314.5 L884.3 315.4 L883.3 314.9 L882.3 314.7 L881.3 316.2 L880.3 318.6 L879.3 319.0 L878.3 319.5 L877.3 319.6 L876.3 317.7 L875.3 316.7 L874.3 320.6 L873.3 320.9 L872.3 321.3 L871.3 321.5 L870.3 321.7 L869.3 323.0 L868.3 324.2 L867.3 325.6 L866.3 327.1 L865.3 328.7 L864.3 330.7 L863.3 331.9 L862.3 330.8 L861.3 331.5 L860.3 328.8 L859.3 331.5 L858.3 327.8 L857.3 331.7 L856.3 330.6 L855.3 326.7 L854.3 323.3 L853.3 319.8 L852.3 321.2 L851.3 319.8 L850.3 317.5 L849.3 321.2 L848.3 321.2 L847.3 321.6 L846.3 318.3 L845.3 321.9 L844.3 322.0 L843.3 322.0 L842.3 320.2 L841.3 321.5 L840.3 322.5 L839.3 320.5 L838.3 320.8 L837.3 322.4 L836.3 322.3 L835.3 322.0 L834.3 321.6 L833.3 322.6 L832.3 334.5 L831.3 321.6 L830.3 321.5 L829.3 320.2 L828.3 321.5 L827.3 321.3 L826.3 321.2 L825.3 321.2 L824.3 321.0 L823.3 322.2 L822.3 322.4 L821.3 323.2 L820.3 322.7 L819.3 325.4 L818.3 326.7 L817.3 326.2 L816.3 332.7 L815.3 330.6 L814.3 331.6 L813.3 329.4 L812.3 329.2 L811.3 326.6 L810.3 325.8 L809.3 324.5 L808.3 323.3 L807.3 322.2 L806.3 321.1 L805.3 321.3 L804.3 321.3 L803.3 320.2 L802.3 324.0 L801.3 325.3 L800.3 326.5 L799.3 331.1 L798.3 328.9 L797.3 334.6 L796.3 330.9 L795.3 329.8 L794.3 329.1 L793.3 327.9 L792.3 326.4 L791.3 325.9 L790.3 326.5 L789.3 327.4 L788.3 328.9 L787.3 329.3 L786.3 330.8 L785.3 333.8 L784.3 336.7 L783.3 336.7 L782.3 341.2 L781.3 345.4 L780.3 347.3 L779.3 346.5 L778.3 343.0 L777.3 340.5 L776.3 337.7 L775.3 328.5 L774.3 331.3 L773.3 326.9 L772.3 331.8 L771.3 328.6 L770.3 331.4 L769.3 334.6 L768.3 336.0 L767.3 338.2 L766.3 340.1 L765.3 339.5 L764.3 346.0 L763.3 342.3 L762.3 340.0 L761.3 335.5 L760.3 331.2 L759.3 328.8 L758.3 326.9 L757.3 326.7 L756.3 328.6 L755.3 328.5 L754.3 330.2 L753.3 340.3 L752.3 341.2 L751.3 338.0 L750.3 342.2 L749.3 343.8 L748.3 344.9 L747.3 337.8 L746.3 348.2 L745.3 350.4 L744.3 350.7 L743.3 350.6 L742.3 349.9 L741.3 345.7 L740.3 348.0 L739.3 347.4 L738.3 348.2 L737.3 346.1 L736.3 347.5 L735.3 328.8 L734.3 311.5 L733.3 312.1 L732.3 312.0 L731.3 311.8 L730.3 312.7 L729.3 314.3 L728.3 316.3 L727.3 318.6 L726.3 313.8 L725.3 313.5 L724.3 312.3 L723.3 311.9 L722.3 311.3 L721.3 313.6 L720.3 314.3 L719.3 316.9 L718.3 321.2 L717.3 349.5 L716.3 321.2 L715.3 319.6 L714.3 321.8 L713.3 322.2 L712.3 322.6 L711.3 321.4 L710.3 323.0 L709.3 325.6 L708.3 323.7 L707.3 326.8 L706.3 326.8 L705.3 326.5 L704.3 325.7 L703.3 325.0 L702.3 323.6 L701.3 320.3 L700.3 321.1 L699.3 322.7 L698.3 322.4 L697.3 322.1 L696.3 318.7 L695.3 319.3 L694.3 320.2 L693.3 319.1 L692.3 319.1 L691.3 317.8 L690.3 319.4 L689.3 324.5 L688.3 329.1 L687.3 330.2 L686.3 329.4 L685.3 326.5 L684.3 329.7 L683.3 329.0 L682.3 329.4 L681.3 331.5 L680.3 326.2 L679.3 329.2 L678.3 332.6 L677.3 327.8 L676.3 332.3 L675.3 333.2 L674.3 332.6 L673.3 328.6 L672.3 331.7 L671.3 331.4 L670.3 330.1 L669.3 324.4 L668.3 328.8 L667.3 328.4 L666.3 330.0 L665.3 328.5 L664.3 327.3 L663.3 325.6 L662.3 328.0 L661.3 327.5 L660.3 327.0 L659.3 326.9 L658.3 322.1 L657.3 326.5 L656.3 323.2 L655.3 327.5 L654.3 328.9 L653.3 325.9 L652.3 330.4 L651.3 326.7 L650.3 336.7 L649.3 338.4 L648.3 335.9 L647.3 327.7 L646.3 331.5 L645.3 323.9 L644.3 328.1 L643.3 324.1 L642.3 336.9 L641.3 346.9 L640.3 339.8 L639.3 344.3 L638.3 342.7 L637.3 341.8 L636.3 339.4 L635.3 335.4 L634.3 332.7 L633.3 335.3 L632.3 334.4 L631.3 333.2 L630.3 331.0 L629.3 339.4 L628.3 338.9 L627.3 339.5 L626.3 336.6 L625.3 339.4 L624.3 339.3 L623.3 340.3 L622.3 340.3 L621.3 338.8 L620.3 333.7 L619.3 340.5 L618.3 333.3 L617.3 338.8 L616.3 333.0 L615.3 339.1 L614.3 333.9 L613.3 330.5 L612.3 335.5 L611.3 336.3 L610.3 338.6 L609.3 337.2 L608.3 339.1 L607.3 339.1 L606.3 339.1 L605.3 340.0 L604.3 341.2 L603.3 342.0 L602.3 343.1 L601.3 346.1 L600.3 345.3 L599.3 341.2 L598.3 343.5 L597.3 334.1 L596.3 341.3 L595.3 340.9 L594.3 341.1 L593.3 340.0 L592.3 335.6 L591.3 338.4 L590.3 343.6 L589.3 336.5 L588.3 349.6 L587.3 347.7 L586.3 340.8 L585.3 338.6 L584.3 348.6 L583.3 340.0 L582.3 345.7 L581.3 349.6 L580.3 349.7 L579.3 332.3 L578.3 325.8 L577.3 319.2 L576.3 315.0 L575.3 315.8 L574.3 316.3 L573.3 316.3 L572.3 317.9 L571.3 318.2 L570.3 321.2 L569.3 321.8 L568.3 324.7 L567.3 325.6 L566.3 325.9 L565.3 328.9 L564.3 333.7 L563.3 328.2 L562.3 328.2 L561.3 330.2 L560.3 326.4 L559.3 325.7 L558.3 324.7 L557.3 323.7 L556.3 322.0 L555.3 322.0 L554.3 320.3 L553.3 321.4 L552.3 321.2 L551.3 321.3 L550.3 321.1 L549.3 322.3 L548.3 323.1 L547.3 322.7 L546.3 324.9 L545.3 325.4 L544.3 327.4 L543.3 328.4 L542.3 322.6 L541.3 328.0 L540.3 328.7 L539.3 328.6 L538.3 327.5 L537.3 323.8 L536.3 329.4 L535.3 328.0 L534.3 327.5 L533.3 329.4 L532.3 329.1 L531.3 325.5 L530.3 328.0 L529.3 328.6 L528.3 328.5 L527.3 328.0 L526.3 328.1 L525.3 326.3 L524.3 326.3 L523.3 326.6 L522.3 339.8 L521.3 324.6 L520.3 323.1 L519.3 323.2 L518.3 324.4 L517.3 320.0 L516.3 324.1 L515.3 324.7 L514.3 324.9 L513.3 324.0 L512.3 322.8 L511.3 325.2 L510.3 326.1 L509.3 321.2 L508.3 326.3 L507.3 327.2 L506.3 323.1 L505.3 328.4 L504.3 323.5 L503.3 329.3 L502.3 325.8 L501.3 330.7 L500.3 331.5 L499.3 330.8 L498.3 335.5 L497.3 337.3 L496.3 335.9 L495.3 340.3 L494.3 337.9 L493.3 329.6 L492.3 333.1 L491.3 332.2 L490.3 329.2 L489.3 330.2 L488.3 324.4 L487.3 331.5 L486.3 334.8 L485.3 329.9 L484.3 338.2 L483.3 336.6 L482.3 333.4 L481.3 333.5 L480.3 329.4 L479.3 330.4 L478.3 331.8 L477.3 333.2 L476.3 331.1 L475.3 333.4 L474.3 333.6 L473.3 337.6 L472.3 336.1 L471.3 338.5 L470.3 346.1 L469.3 343.1 L468.3 345.0 L467.3 339.5 L466.3 347.9 L465.3 342.2 L464.3 348.0 L463.3 344.7 L462.3 345.8 L461.3 346.4 L460.3 345.4 L459.3 338.9 L458.3 339.7 L457.3 338.4 L456.3 336.9 L455.3 337.1 L454.3 336.8 L453.3 336.2 L452.3 330.2 L451.3 335.0 L450.3 334.8 L449.3 334.0 L448.3 327.9 L447.3 332.6 L446.3 333.8 L445.3 330.8 L444.3 346.3 L443.3 333.9 L442.3 330.0 L441.3 328.6 L440.3 331.2 L439.3 332.0 L438.3 332.7 L437.3 335.0 L436.3 331.2 L435.3 338.4 L434.3 333.5 L433.3 341.7 L432.3 335.3 L431.3 347.4 L430.3 348.4 L429.3 349.6 L428.3 348.2 L427.3 353.1 L426.3 347.2 L425.3 357.3 L424.3 342.4 L423.3 320.4 L422.3 313.5 L421.3 314.4 L420.3 315.0 L419.3 315.6 L418.3 316.8 L417.3 315.9 L416.3 316.0 L415.3 319.6 L414.3 319.2 L413.3 320.1 L412.3 321.7 L411.3 321.8 L410.3 320.7 L409.3 325.6 L408.3 322.3 L407.3 328.1 L406.3 330.4 L405.3 331.6 L404.3 329.2 L403.3 330.8 L402.3 330.4 L401.3 329.5 L400.3 329.8 L399.3 326.1 L398.3 328.8 L397.3 324.1 L396.3 330.1 L395.3 338.6 L394.3 324.5 L393.3 323.5 L392.3 328.2 L391.3 323.6 L390.3 325.0 L389.3 327.2 L388.3 326.9 L387.3 324.7 L386.3 325.6 L385.3 326.4 L384.3 325.5 L383.3 326.6 L382.3 327.5 L381.3 327.4 L380.3 328.2 L379.3 324.6 L378.3 327.8 L377.3 331.8 L376.3 331.1 L375.3 332.8 L374.3 328.5 L373.3 319.8 L372.3 319.1 L371.3 317.7 L370.3 319.0 L369.3 320.3 L368.3 325.7 L367.3 327.5 L366.3 333.3 L365.3 334.1 L364.3 332.4 L363.3 332.8 L362.3 326.4 L361.3 330.2 L360.3 331.0 L359.3 330.2 L358.3 330.6 L357.3 329.9 L356.3 327.2 L355.3 325.8 L354.3 330.4 L353.3 328.4 L352.3 327.3 L351.3 330.1 L350.3 334.6 L349.3 336.8 L348.3 333.4 L347.3 335.7 L346.3 339.5 L345.3 338.4 L344.3 336.9 L343.3 335.9 L342.3 331.0 L341.3 335.2 L340.3 334.0 L339.3 333.4 L338.3 330.5 L337.3 327.2 L336.3 334.1 L335.3 327.3 L334.3 336.3 L333.3 338.1 L332.3 338.9 L331.3 338.5 L330.3 335.3 L329.3 330.3 L328.3 327.4 L327.3 328.5 L326.3 322.9 L325.3 326.5 L324.3 330.0 L323.3 338.1 L322.3 341.2 L321.3 347.9 L320.3 342.4 L319.3 345.6 L318.3 334.0 L317.3 335.6 L316.3 342.9 L315.3 337.4 L314.3 342.0 L313.3 335.2 L312.3 332.0 L311.3 328.2 L310.3 327.5 L309.3 326.1 L308.3 327.6 L307.3 331.4 L306.3 335.3 L305.3 338.6 L304.3 347.1 L303.3 346.0 L302.3 341.1 L301.3 338.0 L300.3 337.3 L299.3 336.1 L298.3 339.3 L297.3 334.4 L296.3 343.1 L295.3 345.5 L294.3 340.2 L293.3 350.9 L292.3 352.7 L291.3 352.7 L290.3 349.1 L289.3 356.8 L288.3 359.3 L287.3 354.5 L286.3 353.6 L285.3 349.5 L284.3 341.8 L283.3 339.0 L282.3 345.4 L281.3 343.1 L280.3 342.9 L279.3 340.4 L278.3 343.4 L277.3 345.5 L276.3 344.9 L275.3 341.9 L274.3 340.3 L273.3 343.4 L272.3 337.9 L271.3 342.7 L270.3 344.8 L269.3 354.3 L268.3 346.4 L267.3 333.2 L266.3 320.2 L265.3 314.0 L264.3 314.9 L263.3 314.1 L262.3 315.1 L261.3 316.9 L260.3 317.1 L259.3 320.0 L258.3 320.8 L257.3 320.4 L256.3 323.1 L255.3 321.7 L254.3 326.7 L253.3 326.7 L252.3 330.9 L251.3 327.6 L250.3 326.5 L249.3 326.8 L248.3 325.9 L247.3 324.8 L246.3 323.2 L245.3 322.7 L244.3 322.0 L243.3 317.9 L242.3 320.1 L241.3 321.0 L240.3 321.7 L239.3 322.0 L238.3 322.6 L237.3 323.2 L236.3 321.6 L235.3 323.9 L234.3 325.7 L233.3 326.7 L232.3 327.2 L231.3 325.3 L230.3 329.4 L229.3 328.1 L228.3 327.1 L227.3 326.0 L226.3 320.9 L225.3 321.8 L224.3 324.3 L223.3 325.4 L222.3 326.2 L221.3 323.3 L220.3 328.8 L219.3 329.1 L218.3 327.8 L217.3 326.8 L216.3 322.9 L215.3 332.2 L214.3 335.6 L213.3 330.5 L212.3 338.3 L211.3 342.1 L210.3 340.4 L209.3 333.5 L208.3 328.2 L207.3 327.3 L206.3 325.2 L205.3 320.4 L204.3 321.9 L203.3 322.4 L202.3 323.8 L201.3 324.1 L200.3 323.5 L199.3 323.8 L198.3 327.1 L197.3 325.1 L196.3 327.5 L195.3 324.9 L194.3 328.3 L193.3 322.9 L192.3 326.5 L191.3 327.2 L190.3 323.2 L189.3 323.9 L188.3 328.4 L187.3 327.2 L186.3 326.9 L185.3 324.6 L184.3 329.5 L183.3 329.9 L182.3 331.1 L181.3 331.9 L180.3 333.0 L179.3 334.1 L178.3 330.6 L177.3 336.9 L176.3 332.1 L175.3 332.4 L174.3 326.6 L173.3 326.2 L172.3 321.6 L171.3 325.1 L170.3 322.9 L169.3 319.4 L168.3 319.3 L167.3 323.1 L166.3 320.8 L165.3 323.6 L164.3 320.8 L163.3 323.8 L162.3 324.3 L161.3 324.2 L160.3 324.8 L159.3 326.5 L158.3 345.6 L157.3 327.0 L156.3 321.4 L155.3 325.6 L154.3 327.3 L153.3 324.2 L152.3 326.0 L151.3 330.0 L150.3 330.0 L149.3 329.4 L148.3 329.4 L147.3 332.8 L146.3 334.9 L145.3 336.6 L144.3 338.4 L143.3 336.5 L142.3 342.6 L141.3 345.2 L140.3 343.5 L139.3 345.9 L138.3 345.9 L137.3 347.6 L136.3 326.9 L135.3 335.1 L134.3 347.5 L133.3 349.4 L132.3 348.7 L131.3 343.4 L130.3 335.3 L129.3 345.2 L128.3 341.7 L127.3 341.7 L126.3 338.1 L125.3 343.7 L124.3 345.0 L123.3 345.7 L122.3 346.3 L121.3 344.1 L120.3 337.0 L119.3 348.4 L118.3 343.2 L117.3 349.8 L116.3 344.2 L115.3 348.9 L114.3 348.3 L113.3 349.9 L112.3 349.4 Z"/>
  <rect x="324" y="249.4" width="0.9" height="117.6" fill="#333"/>
</svg>
</body></html>
